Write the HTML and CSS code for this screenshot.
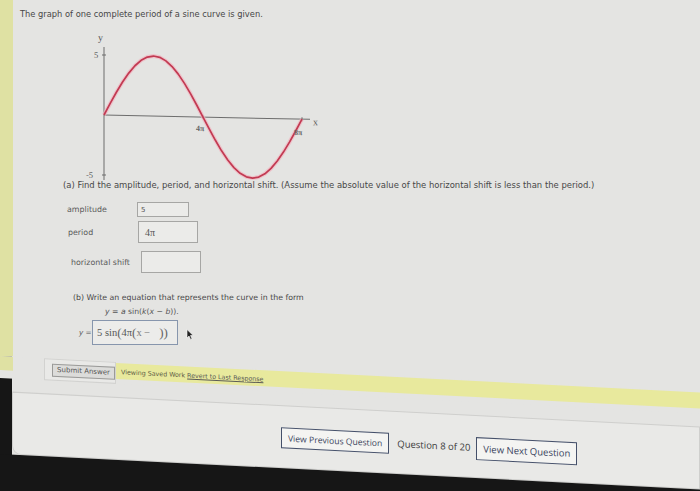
FILE: index.html
```html
<!DOCTYPE html>
<html>
<head>
<meta charset="utf-8">
<title>Sine curve question</title>
<link rel="stylesheet" href="styles.css">
</head>
<body>
<div class="screen">
  <div class="question">
    <p class="intro">The graph of one complete period of a sine curve is given.</p>
    <svg class="graph" width="240" height="150" viewBox="0 0 240 150">
      <line x1="24" y1="17" x2="24" y2="150" stroke="#6d6d6d" stroke-width="1"/>
      <line x1="22" y1="25" x2="26" y2="25" stroke="#6d6d6d" stroke-width="1"/>
      <line x1="22" y1="145" x2="26" y2="145" stroke="#6d6d6d" stroke-width="1"/>
      <line x1="24" y1="85" x2="230" y2="85" stroke="#6d6d6d" stroke-width="1"/>
      <line x1="123" y1="83" x2="123" y2="87" stroke="#6d6d6d" stroke-width="1"/>
      <line x1="222" y1="83" x2="222" y2="87" stroke="#6d6d6d" stroke-width="1"/>
      <polyline class="halo" points="24,85 30.19,73.29 36.38,62.04 42.56,51.66 48.75,42.57 54.94,35.11 61.13,29.57 67.31,26.15 73.5,25 79.69,26.15 85.88,29.57 92.06,35.11 98.25,42.57 104.44,51.66 110.63,62.04 116.81,73.29 123,85 129.19,96.71 135.38,107.96 141.56,118.34 147.75,127.43 153.94,134.89 160.13,140.43 166.31,143.85 172.5,145 178.69,143.85 184.88,140.43 191.06,134.89 197.25,127.43 203.44,118.34 209.63,107.96 215.81,96.71 222,85"/>
      <polyline class="curve" points="24,85 30.19,73.29 36.38,62.04 42.56,51.66 48.75,42.57 54.94,35.11 61.13,29.57 67.31,26.15 73.5,25 79.69,26.15 85.88,29.57 92.06,35.11 98.25,42.57 104.44,51.66 110.63,62.04 116.81,73.29 123,85 129.19,96.71 135.38,107.96 141.56,118.34 147.75,127.43 153.94,134.89 160.13,140.43 166.31,143.85 172.5,145 178.69,143.85 184.88,140.43 191.06,134.89 197.25,127.43 203.44,118.34 209.63,107.96 215.81,96.71 222,85"/>
      <text x="18" y="11" class="g-lbl">y</text>
      <text x="14" y="28" class="g-num">5</text>
      <text x="6" y="148" class="g-num">-5</text>
      <text x="233" y="91" class="g-lbl">x</text>
      <text x="116" y="99" class="g-pi">4π</text>
      <text x="214" y="101" class="g-pi">8π</text>
    </svg>
    <p class="part-a">(a) Find the amplitude, period, and horizontal shift. (Assume the absolute value of the horizontal shift is less than the period.)</p>
    <div class="answers">
      <div class="row row-amp"><span class="label">amplitude</span><span class="box box-small">5</span></div>
      <div class="row row-per"><span class="label">period</span><span class="box box-math">4π</span></div>
      <div class="row row-shift"><span class="label">horizontal shift</span><span class="box box-math"></span></div>
    </div>
    <p class="part-b">(b) Write an equation that represents the curve in the form</p>
    <p class="form"><i>y</i> = <i>a</i> sin(<i>k</i>(<i>x</i> − <i>b</i>)).</p>
    <div class="eq-row">
      <span class="eq-label"><i>y</i> =</span>
      <span class="eq-box">5 sin<span class="paren">(</span>4π<span class="paren">(</span><span class="var">x</span>&nbsp;<span class="minus">−</span><span class="slot"></span><span class="paren">)</span><span class="paren">)</span></span>
      <svg class="pointer" width="8" height="11" viewBox="0 0 8 11"><path d="M1 0.5 L1 9 L3 7 L4.6 10.4 L6 9.8 L4.5 6.5 L7.2 6.5 Z" fill="#222" stroke="#fff" stroke-width="0.6"/></svg>
    </div>
  </div>
  <div class="bottom">
    <div class="submit-row">
      <div class="submit-wrap"><button class="submit">Submit Answer</button></div>
      <div class="saved">Viewing Saved Work <a class="revert">Revert to Last Response</a></div>
    </div>
    <div class="footer">
      <button class="nav nav-prev">View Previous Question</button>
      <span class="count">Question 8 of 20</span>
      <button class="nav nav-next">View Next Question</button>
    </div>
    <div class="bezel"></div>
  </div>
</div>
</body>
</html>
```

FILE: styles.css
```css
* { box-sizing: border-box; }
html, body { margin: 0; padding: 0; }
body {
  width: 700px;
  height: 491px;
  overflow: hidden;
  background: #e4e4e2;
  font-family: "DejaVu Sans", Verdana, sans-serif;
  color: #4a4a4a;
}
.screen { height: 491px; background: #e4e4e2; }

.question {
  border-left: 13px solid #dfe1a3;
  padding: 9px 0 11px 7px;
}
.intro { margin: 0; font-size: 8.3px; line-height: 11px; color: #474747; }

.graph {
  display: block;
  margin: 10px 0 0 60px;
  transform: skewY(1.2deg);
  transform-origin: 24px 85px;
}
.g-lbl { font-family: "Liberation Serif", serif; font-size: 10px; fill: #555; }
.g-num { font-family: "Liberation Serif", serif; font-size: 8.5px; fill: #555; }
.g-pi { font-family: "Liberation Serif", serif; font-size: 8px; font-weight: bold; fill: #666; }
.halo { fill: none; stroke: #f1b5c0; stroke-width: 4; stroke-linejoin: round; opacity: 0.7; }
.curve { fill: none; stroke: #c23a52; stroke-width: 1.7; stroke-linejoin: round; }

.part-a { margin: 0 0 0 43px; font-size: 8.45px; line-height: 11px; color: #474747; }

.answers { margin-left: 47px; display: flex; flex-direction: column; }
.row { display: flex; align-items: center; }
.label { width: 70px; font-size: 7.9px; color: #5a5a5a; }
.row-amp { margin-top: 11px; }
.row-per { margin-top: 4px; padding-left: 1px; }
.row-shift { margin-top: 8px; padding-left: 4px; }
.box {
  display: flex;
  align-items: center;
  border: 1px solid #a6a6a4;
  background: #ebebe9;
  color: #555;
}
.box-small { width: 52px; height: 15px; font-size: 7px; padding-left: 3px; }
.box-math {
  width: 60px;
  height: 22px;
  padding-left: 6px;
  font-family: "Liberation Serif", serif;
  font-size: 10px;
}

.part-b { margin: 19px 0 0 53px; font-size: 7.8px; line-height: 11px; color: #474747; }
.form { margin: 3px 0 0 85px; font-size: 7.7px; line-height: 11px; color: #555; }

.eq-row { margin: 3px 0 0 59px; display: flex; align-items: center; height: 25px; }
.eq-label { width: 13px; font-size: 7.2px; color: #555; }
.eq-box {
  display: flex;
  align-items: center;
  width: 86px;
  height: 25px;
  border: 1.5px solid #8796ad;
  background: #ececea;
  padding-left: 4px;
  font-family: "Liberation Serif", serif;
  font-size: 10.5px;
  color: #555;
  white-space: nowrap;
}
.paren { font-size: 13px; line-height: 1; color: #666; }
.var { color: #777; }
.minus { color: #777; }
.slot { display: inline-block; width: 9px; }
.pointer { margin-left: 8px; margin-top: 4px; }

.bottom {
  transform: skewY(2.9deg);
  transform-origin: 0 0;
  background: linear-gradient(to right, #161616 12px, #e4e4e2 12px);
}
.submit-row {
  display: flex;
  height: 22px;
  background: linear-gradient(#dfe1a3, #dfe1a3) 0 0 / 13px 14px no-repeat, #e4e4e2;
}
.submit-wrap {
  margin-left: 44px;
  width: 72px;
  height: 22px;
  border: 1px solid #d2d2d0;
  background: #e9e9e7;
  display: flex;
  align-items: center;
  padding-left: 7px;
}
.submit {
  width: 63px;
  height: 13px;
  padding: 0;
  border: 1px solid #9a9a98;
  background: #dcdcda;
  font-family: "DejaVu Sans", sans-serif;
  font-size: 7px;
  color: #555;
}
.saved {
  flex: 1;
  margin-top: 1px;
  height: 16px;
  background: #e8e99d;
  padding-left: 5px;
  display: flex;
  align-items: center;
  font-size: 6.3px;
  color: #5b5b44;
  white-space: pre;
}
.revert { text-decoration: underline; color: #5b5b55; }

.footer {
  margin: 13px 0 0 12px;
  height: 63px;
  background: #e9e9e7;
  border: 1px solid #cfcfcd;
  border-radius: 0 0 0 9px;
  display: flex;
  align-items: flex-start;
  padding: 21px 0 0 268px;
  font-family: "Open Sans", sans-serif;
}
.nav {
  height: 21px;
  border: 1px solid #45506a;
  background: #f4f4f2;
  font-family: "Open Sans", sans-serif;
  color: #3b4560;
}
.nav-prev { padding: 0 6px; font-size: 8.6px; }
.nav-next { padding: 0 6px; font-size: 9.5px; height: 23px; }
.count { margin: 0 6px 0 8px; line-height: 21px; font-size: 9.5px; color: #3d3d3d; }
.bezel { height: 90px; background: #161616; }
```
